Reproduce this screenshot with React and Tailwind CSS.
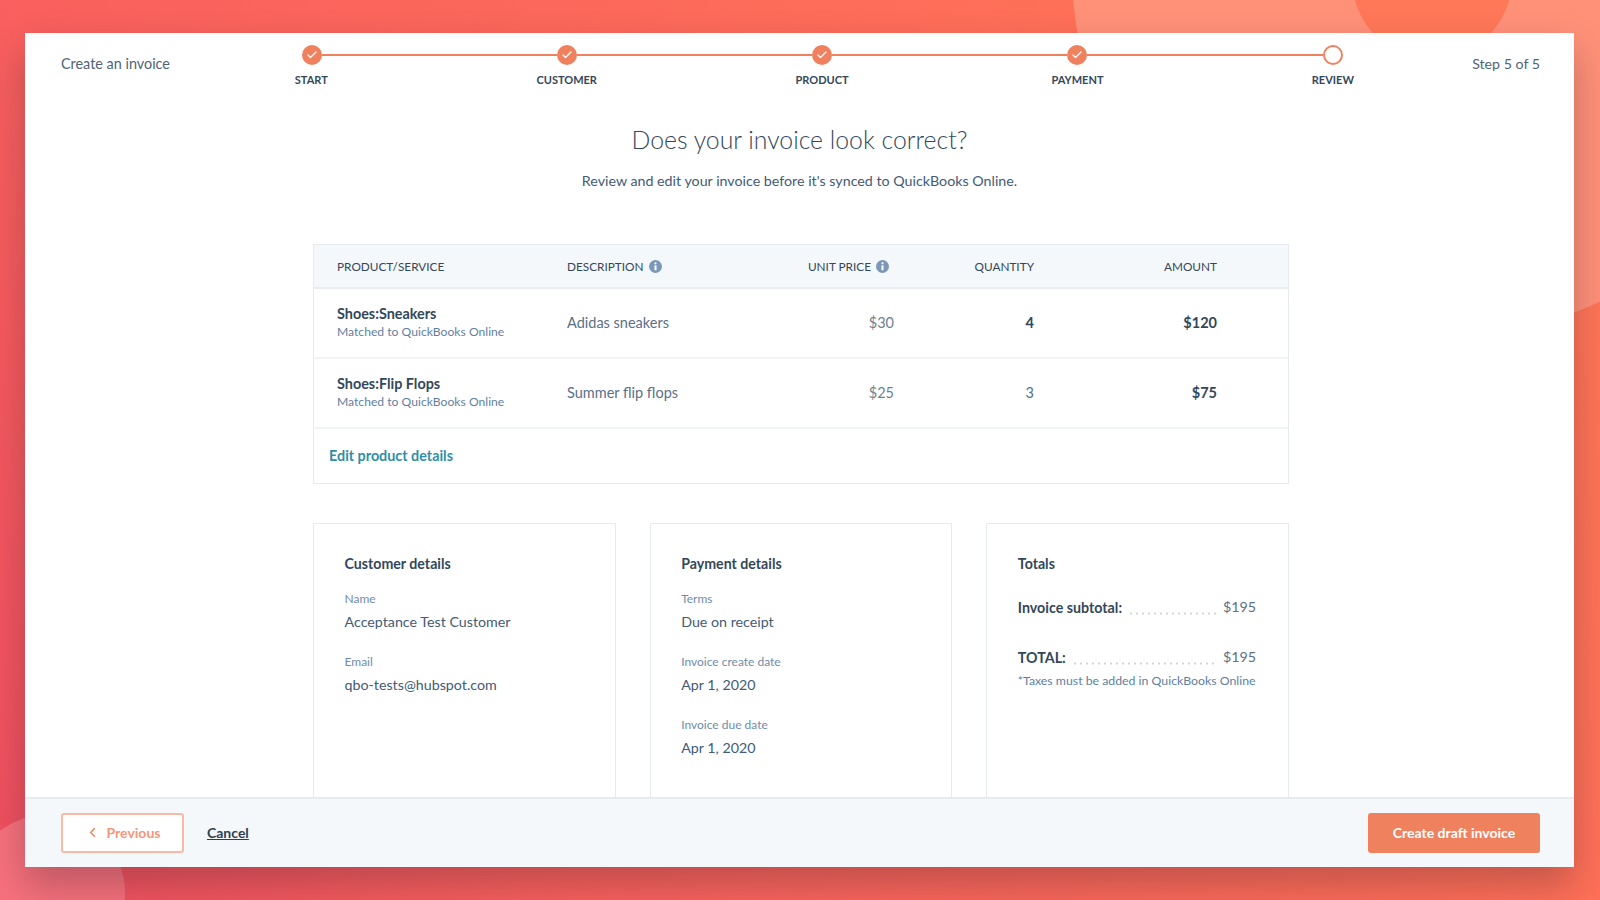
import { Check, ChevronLeft } from "lucide-react";

const steps = ["Start", "Customer", "Product", "Payment", "Review"];

const rows = [
  { name: "Shoes:Sneakers", desc: "Adidas sneakers", price: "$30", qty: "4", qtyBold: true, amount: "$120" },
  { name: "Shoes:Flip Flops", desc: "Summer flip flops", price: "$25", qty: "3", qtyBold: false, amount: "$75" },
];

function InfoDot() {
  return (
    <svg viewBox="0 0 14 14" className="ml-[5px] h-[13px] w-[13px] shrink-0">
      <circle cx="7" cy="7" r="7" fill="#7c98b6" />
      <circle cx="7" cy="3.6" r="1.2" fill="#fff" />
      <rect x="5.9" y="5.8" width="2.2" height="5.2" fill="#fff" />
    </svg>
  );
}

function Stepper() {
  return (
    <div className="w-[1277px]">
      <div className="flex items-center px-[118px] pt-[12px]">
        {steps.map((s, i) => (
          <div key={s} className={i < 4 ? "flex flex-1 items-center" : "flex items-center"}>
            {i < 4 ? (
              <span className="flex h-[20px] w-[20px] shrink-0 items-center justify-center rounded-full bg-[#f0815f]">
                <Check size={12} strokeWidth={2.5} className="text-white" />
              </span>
            ) : (
              <span className="h-[20px] w-[20px] shrink-0 rounded-full border-2 border-[#f0815f] bg-white" />
            )}
            {i < 4 && <span className="h-[2px] flex-1 bg-[#f0815f]" />}
          </div>
        ))}
      </div>
      <div className="mt-[7px] grid grid-cols-5">
        {steps.map((s) => (
          <div key={s} className="text-center text-[11px] font-bold uppercase leading-[16px] text-[#33475b]">
            {s}
          </div>
        ))}
      </div>
    </div>
  );
}

function ProductTable() {
  return (
    <div className="border border-[#e6ebf2] text-[14.5px]">
      <div className="grid h-[44px] grid-cols-[230px_190px_137px_140px_183px] items-center border-b-2 border-[#e9edf3] bg-[#f5f8fa] pl-[23px] pt-[1px] text-[11.8px] uppercase text-[#33475b]">
        <div>Product/Service</div>
        <div className="flex items-center">Description<InfoDot /></div>
        <div className="flex items-center justify-end pr-[5px]">Unit price<InfoDot /></div>
        <div className="text-right">Quantity</div>
        <div className="text-right">Amount</div>
      </div>
      {rows.map((r) => (
        <div
          key={r.name}
          className="grid h-[70px] grid-cols-[230px_190px_137px_140px_183px] items-center border-b-2 border-[#f0f3f7] pl-[23px] text-[#516f90]"
        >
          <div className="pb-[2px]">
            <div className="text-[14.4px] font-bold leading-[18px] text-[#33475b]">{r.name}</div>
            <div className="text-[12.15px] leading-[17px] text-[#5f7f9f]">Matched to QuickBooks Online</div>
          </div>
          <div className="text-[#5b6f85]">{r.desc}</div>
          <div className="text-right text-[#6d7f93]">{r.price}</div>
          <div className={r.qtyBold ? "text-right font-bold text-[#33475b]" : "text-right text-[#516f90]"}>{r.qty}</div>
          <div className="text-right font-bold text-[#33475b]">{r.amount}</div>
        </div>
      ))}
      <div className="flex h-[54px] items-center pl-[15px] text-[14.35px] font-bold text-[#2f8fa8]">
        Edit product details
      </div>
    </div>
  );
}

function Field({ label, value }) {
  return (
    <div className="mb-[21px]">
      <div className="text-[12px] leading-[18px] text-[#6f8cab]">{label}</div>
      <div className="mt-[4px] text-[14.25px] leading-[20px] text-[#425b76]">{value}</div>
    </div>
  );
}

function Card({ title, children }) {
  return (
    <div className="h-[275px] border border-b-0 border-[#e6ebf2] pl-[30.5px] pr-[32px] pt-[30px]">
      <div className="mb-[16px] text-[14.2px] font-bold leading-[20px] text-[#33475b]">{title}</div>
      {children}
    </div>
  );
}

function Dots() {
  return (
    <span className="mx-[6px] mb-[3px] h-[3px] flex-1 self-end bg-[radial-gradient(circle,#cbd6e2_1px,transparent_1.2px)] bg-[length:6px_3px] bg-repeat-x" />
  );
}

function Totals() {
  return (
    <Card title="Totals">
      <div className="mt-[24px] flex items-center text-[14.25px] leading-[20px]">
        <span className="font-bold text-[#33475b]">Invoice subtotal:</span>
        <Dots />
        <span className="-mt-[2px] text-[#5b6f85]">$195</span>
      </div>
      <div className="mt-[30px] flex items-center text-[14.25px] leading-[20px]">
        <span className="font-bold text-[#33475b]">TOTAL:</span>
        <Dots />
        <span className="-mt-[2px] text-[#5b6f85]">$195</span>
      </div>
      <div className="mt-[4px] whitespace-nowrap text-[12.3px] leading-[18px] text-[#5f7f9f]">
        *Taxes must be added in QuickBooks Online
      </div>
    </Card>
  );
}

export default function App() {
  return (
    <div className="relative h-[900px] w-[1600px] overflow-hidden bg-[linear-gradient(60deg,#ee4f60_0%,#f9605e_25%,#ff7058_75%,#ff7858_100%)] font-['Lato','Liberation_Sans',sans-serif]">
      {/* background blobs */}
      <div className="absolute left-[1072px] top-[-398px] h-[736px] w-[736px] rounded-full bg-[#ff9179]" />
      <div className="absolute left-[1352px] top-[-101px] h-[160px] w-[160px] rounded-full bg-[#ff7858]" />
      <div className="absolute left-[-31px] top-[815px] h-[156px] w-[156px] rounded-full bg-[#f6717d]" />

      <div className="absolute left-[25px] top-[33px] flex h-[834px] w-[1549px] flex-col bg-white shadow-[0_18px_36px_rgba(40,20,30,0.28)]">
        <header className="flex pl-[36px] pr-[34px]">
          <div className="w-[122.6px] pt-[21px] text-[14.4px] leading-[20px] text-[#4f6378]">Create an invoice</div>
          <Stepper />
          <div className="flex-1 whitespace-nowrap pt-[21px] text-right text-[14.2px] leading-[20px] text-[#4f6378]">Step 5 of 5</div>
        </header>

        <h1 className="mt-[36px] text-center text-[24.8px] font-light leading-[32px] text-[#33475b]">
          Does your invoice look correct?
        </h1>
        <p className="mt-[15px] text-center text-[14.25px] leading-[20px] text-[#425b76]">
          Review and edit your invoice before it's synced to QuickBooks Online.
        </p>

        <div className="ml-[288px] mr-[285px] mt-[53px] flex min-h-0 flex-1 flex-col">
          <ProductTable />
          <div className="mt-[39px] grid grid-cols-3 gap-[34px]">
            <Card title="Customer details">
              <Field label="Name" value="Acceptance Test Customer" />
              <Field label="Email" value="qbo-tests@hubspot.com" />
            </Card>
            <Card title="Payment details">
              <Field label="Terms" value="Due on receipt" />
              <Field label="Invoice create date" value="Apr 1, 2020" />
              <Field label="Invoice due date" value="Apr 1, 2020" />
            </Card>
            <Totals />
          </div>
        </div>

        <footer className="flex h-[70px] shrink-0 items-center border-t-2 border-[#e6ebf2] bg-[#f5f8fa] pl-[36px] pr-[34px]">
          <button className="flex h-[40px] w-[123px] items-center justify-center rounded-[3px] border-2 border-[#f9b9a4] bg-white pb-[1px] text-[14px] font-bold text-[#f5957a]">
            <ChevronLeft size={15} strokeWidth={2.5} className="mr-[7px] text-[#f0815f]" />
            Previous
          </button>
          <a className="mb-[1px] ml-[23px] text-[14px] font-bold text-[#2d3e50] underline">Cancel</a>
          <button className="ml-auto h-[40px] w-[172px] rounded-[3px] bg-[#f0815f] pb-[1px] text-[14px] font-bold text-white">
            Create draft invoice
          </button>
        </footer>
      </div>
    </div>
  );
}
